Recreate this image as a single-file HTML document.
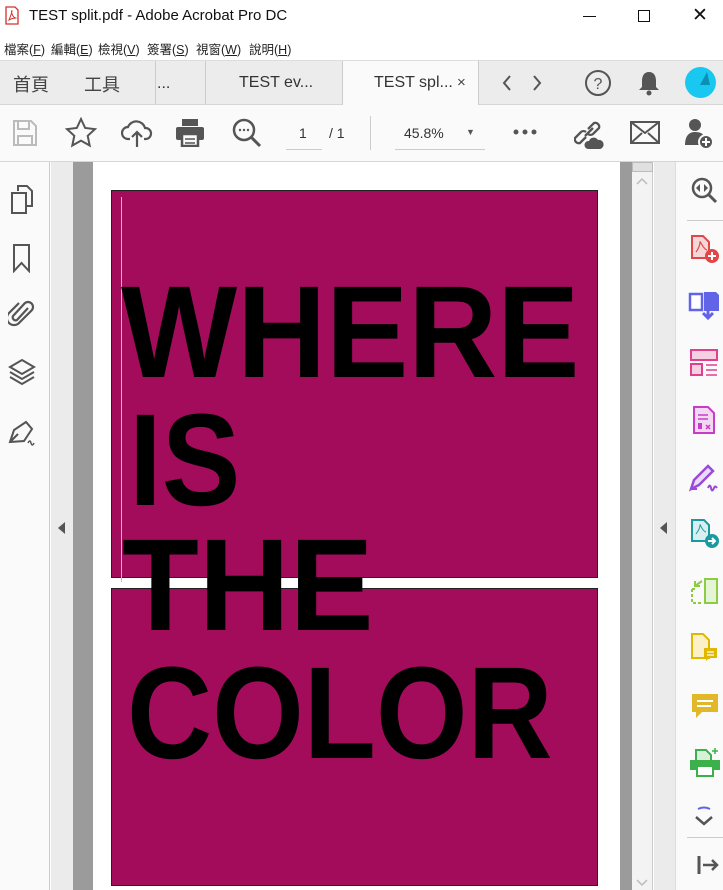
<!DOCTYPE html>
<html><head><meta charset="utf-8"><style>
*{margin:0;padding:0;box-sizing:border-box}
body{width:723px;height:890px;overflow:hidden;background:#fff;font-family:"Liberation Sans","Noto Sans CJK TC",sans-serif;position:relative;color:#333}
.a{position:absolute}
.m{position:absolute;top:39px;font-size:12.5px;color:#222;white-space:nowrap}
.big{position:absolute;font-weight:bold;font-size:131px;line-height:131px;color:#000;transform-origin:0 0;white-space:nowrap}
</style></head><body>
<div class="a" style="left:0;top:0;width:723px;height:34px;background:#fff"></div>
<svg class="a" style="left:5px;top:6px" width="14" height="19" viewBox="0 0 14 19"><path d="M1 1h9l3 3v14H1z" fill="#fff" stroke="#d4302e" stroke-width="1.3"/><path d="M4 14c2-5 3-8 3-9s-1 0 0 3 3 4 4 4-4 0-7 2z" fill="none" stroke="#d4302e" stroke-width="1"/></svg>
<div class="a" style="left:29px;top:7px;font-size:15px;color:#111">TEST split.pdf - Adobe Acrobat Pro DC</div>
<div class="a" style="left:583px;top:16px;width:13px;height:1px;background:#111"></div>
<div class="a" style="left:638px;top:10px;width:12px;height:12px;border:1px solid #111"></div>
<div class="a" style="left:692px;top:4px;font-size:19px;color:#111">✕</div>
<div class="a" style="left:0;top:34px;width:723px;height:26px;background:#fff"></div>
<div class="m" style="left:4px">檔案(<u>F</u>)</div>
<div class="m" style="left:51px">編輯(<u>E</u>)</div>
<div class="m" style="left:98px">檢視(<u>V</u>)</div>
<div class="m" style="left:147px">簽署(<u>S</u>)</div>
<div class="m" style="left:196px">視窗(<u>W</u>)</div>
<div class="m" style="left:249px">說明(<u>H</u>)</div>
<div class="a" style="left:0;top:60px;width:723px;height:45px;background:#ececec;border-top:1px solid #ddd;border-bottom:1px solid #d6d6d6"></div>
<div class="a" style="left:13px;top:71px;font-size:18px;color:#444">首頁</div>
<div class="a" style="left:84px;top:71px;font-size:18px;color:#444">工具</div>
<div class="a" style="left:155px;top:61px;width:1px;height:43px;background:#ccc"></div>
<div class="a" style="left:157px;top:75px;font-size:16px;color:#333">...</div>
<div class="a" style="left:205px;top:61px;width:1px;height:43px;background:#ccc"></div>
<div class="a" style="left:239px;top:74px;font-size:16px;color:#333">TEST ev...</div>
<div class="a" style="left:342px;top:61px;width:137px;height:45px;background:#fafafa;border-left:1px solid #ccc;border-right:1px solid #ccc"></div>
<div class="a" style="left:374px;top:74px;font-size:16px;color:#333">TEST spl...</div>
<div class="a" style="left:457px;top:74px;font-size:15px;color:#444">×</div>
<svg class="a" style="left:500px;top:74px" width="45" height="18"><path d="M10 2 4 9l6 7M34 2l6 7-6 7" fill="none" stroke="#555" stroke-width="2"/></svg>
<svg class="a" style="left:584px;top:69px" width="28" height="28"><circle cx="14" cy="14" r="12" fill="none" stroke="#555" stroke-width="2"/><text x="14" y="20" font-size="16" text-anchor="middle" fill="#555" font-family="Liberation Sans">?</text></svg>
<svg class="a" style="left:637px;top:69px" width="24" height="28"><path d="M12 3c-5 0-7 4-7 9v6l-3 3h20l-3-3v-6c0-5-2-9-7-9z" fill="#555"/><circle cx="12" cy="24" r="2.5" fill="#555"/></svg>
<div class="a" style="left:685px;top:67px;width:31px;height:31px;border-radius:50%;background:#18c8f0"></div>
<svg class="a" style="left:685px;top:67px" width="31" height="31"><path d="M15 18 22 5l3 13z" fill="#0a8fb5"/></svg>
<div class="a" style="left:0;top:105px;width:723px;height:57px;background:#fafafa;border-bottom:1px solid #d6d6d6"></div>
<svg class="a" style="left:12px;top:119px" width="26" height="28"><path d="M2 2h17l5 5v19H2z" fill="none" stroke="#bbb" stroke-width="2"/><path d="M6 2v8h11V2M6 26v-9h14v9" fill="none" stroke="#bbb" stroke-width="2"/></svg>
<svg class="a" style="left:65px;top:117px" width="32" height="31"><path d="M16 2l4.2 9 9.8 1.1-7.3 6.7 2 9.7L16 23.6l-8.7 4.9 2-9.7L2 12.1l9.8-1.1z" fill="none" stroke="#555" stroke-width="2"/></svg>
<svg class="a" style="left:121px;top:117px" width="32" height="32"><path d="M9 22H7a6 6 0 0 1 0-12 9 9 0 0 1 17 1 5.5 5.5 0 0 1 1 11h-2" fill="none" stroke="#555" stroke-width="2.2"/><path d="M16 30V15m-5 5 5-5 5 5" fill="none" stroke="#555" stroke-width="2.2"/></svg>
<svg class="a" style="left:175px;top:118px" width="30" height="29"><rect x="7" y="1" width="16" height="7" fill="#555"/><rect x="1" y="9" width="28" height="13" rx="2" fill="#555"/><rect x="7" y="16" width="16" height="12" fill="#fafafa" stroke="#555" stroke-width="2.5"/><path d="M10 21h10M10 25h10" stroke="#555" stroke-width="1.5"/></svg>
<svg class="a" style="left:232px;top:118px" width="30" height="31"><circle cx="12" cy="12" r="10" fill="none" stroke="#555" stroke-width="2.5"/><path d="M19 19l9 9" stroke="#555" stroke-width="3"/><circle cx="8" cy="12" r="1.2" fill="#555"/><circle cx="12" cy="12" r="1.2" fill="#555"/><circle cx="16" cy="12" r="1.2" fill="#555"/></svg>
<div class="a" style="left:299px;top:125px;font-size:14px;color:#333">1</div>
<div class="a" style="left:286px;top:149px;width:36px;height:1px;background:#ccc"></div>
<div class="a" style="left:329px;top:125px;font-size:14px;color:#333">/ 1</div>
<div class="a" style="left:370px;top:116px;width:1px;height:34px;background:#ccc"></div>
<div class="a" style="left:404px;top:125px;font-size:14px;color:#333">45.8%</div>
<div class="a" style="left:466px;top:127px;font-size:9px;color:#555">▼</div>
<div class="a" style="left:395px;top:149px;width:90px;height:1px;background:#ccc"></div>
<svg class="a" style="left:512px;top:128px" width="26" height="8"><circle cx="4" cy="4" r="2.5" fill="#555"/><circle cx="13" cy="4" r="2.5" fill="#555"/><circle cx="22" cy="4" r="2.5" fill="#555"/></svg>
<svg class="a" style="left:574px;top:117px" width="32" height="33"><path d="M12 20 6 26a4 4 0 0 1-5-5l6-6a4 4 0 0 1 5 0M14 12l6-6a4 4 0 0 1 5 5l-6 6a4 4 0 0 1-5 0M11 19l8-8" fill="none" stroke="#555" stroke-width="2.3"/><path d="M14 32a4 4 0 0 1 1-8 5 5 0 0 1 9-1 4.5 4.5 0 0 1 2 9z" fill="#555"/></svg>
<svg class="a" style="left:630px;top:121px" width="30" height="23"><rect x="1" y="1" width="28" height="21" fill="none" stroke="#555" stroke-width="2"/><path d="M1 1l14 11L29 1M1 22l11-10M29 22 18 12" fill="none" stroke="#555" stroke-width="2"/></svg>
<svg class="a" style="left:684px;top:117px" width="32" height="34"><circle cx="11" cy="8" r="6" fill="#555"/><path d="M1 28c0-9 4-13 10-13s8 2 9 4v9z" fill="#555"/><circle cx="22" cy="25" r="7" fill="#555" stroke="#fafafa" stroke-width="2"/><path d="M22 21v8M18 25h8" stroke="#fff" stroke-width="2"/></svg>
<div class="a" style="left:0;top:162px;width:50px;height:728px;background:#fafafa;border-right:1px solid #ccc"></div>
<div class="a" style="left:51px;top:162px;width:22px;height:728px;background:#ebebeb"></div>
<div class="a" style="left:73px;top:162px;width:20px;height:728px;background:#9b9b9b"></div>
<svg class="a" style="left:10px;top:185px" width="26" height="30" fill="none" stroke="#555" stroke-width="2"><path d="M8 6V1h9l5 5v15h-5"/><path d="M2 8h14v20H2z"/></svg>
<svg class="a" style="left:12px;top:243px" width="20" height="30"><path d="M2 2h15v26l-7.5-8L2 28z" fill="none" stroke="#555" stroke-width="2"/></svg>
<svg class="a" style="left:8px;top:298px" width="28" height="30"><path d="M20 10 9 22a3 3 0 0 1-4-4L17 5a5 5 0 0 1 7 7L11 25a7 7 0 0 1-10-10L11 5" fill="none" stroke="#555" stroke-width="2.2"/></svg>
<svg class="a" style="left:8px;top:358px" width="28" height="30"><path d="M14 2 26 9 14 16 2 9z" fill="none" stroke="#555" stroke-width="2"/><path d="M2 14l12 7 12-7M2 19l12 7 12-7" fill="none" stroke="#555" stroke-width="2"/></svg>
<svg class="a" style="left:6px;top:418px" width="30" height="28"><path d="M4 24 8 12l12-8 6 7-8 12z" fill="none" stroke="#555" stroke-width="2"/><path d="M4 24l8-8" stroke="#555" stroke-width="2"/><path d="M22 25q2-4 3 0t3 0" fill="none" stroke="#555" stroke-width="1.5"/></svg>
<div class="a" style="left:58px;top:522px;width:0;height:0;border-top:6px solid transparent;border-bottom:6px solid transparent;border-right:7px solid #555"></div>
<div class="a" style="left:93px;top:162px;width:527px;height:728px;background:#fff"></div>
<div class="a" style="left:111px;top:190px;width:487px;height:388px;background:#a20c5a;border:1px solid #222"></div>
<div class="a" style="left:111px;top:588px;width:487px;height:298px;background:#a20c5a;border:1px solid #222"></div>
<div class="a" style="left:121px;top:197px;width:1px;height:385px;background:#9fd0c8"></div>
<div class="big" style="left:121px;top:266px;transform:scaleX(.94)">WHERE</div>
<div class="big" style="left:129px;top:394px;transform:scaleX(.9)">IS</div>
<div class="big" style="left:122px;top:519px;transform:scaleX(.96)">THE</div>
<div class="big" style="left:127px;top:647px;transform:scaleX(.9)">COLOR</div>
<div class="a" style="left:620px;top:162px;width:12px;height:728px;background:#9b9b9b"></div>
<div class="a" style="left:632px;top:162px;width:21px;height:728px;background:#f3f3f3;border-right:1px solid #ccc"></div>
<div class="a" style="left:632px;top:162px;width:21px;height:10px;background:#e0e0e0;border:1px solid #bbb"></div>
<svg class="a" style="left:636px;top:177px" width="12" height="8"><path d="M1 7 6 2l5 5" fill="none" stroke="#bbb" stroke-width="1.5"/></svg>
<svg class="a" style="left:636px;top:879px" width="12" height="8"><path d="M1 1l5 5 5-5" fill="none" stroke="#bbb" stroke-width="1.5"/></svg>
<div class="a" style="left:654px;top:162px;width:22px;height:728px;background:#ebebeb;border-right:1px solid #ddd"></div>
<div class="a" style="left:660px;top:522px;width:0;height:0;border-top:6px solid transparent;border-bottom:6px solid transparent;border-right:7px solid #555"></div>
<div class="a" style="left:676px;top:162px;width:47px;height:728px;background:#fafafa"></div>
<svg class="a" style="left:690px;top:176px" width="28" height="28"><circle cx="12" cy="12" r="9" fill="none" stroke="#555" stroke-width="2.5"/><path d="M19 19l7 7" stroke="#555" stroke-width="3"/><path d="M10 8l-4 4 4 4zM14 8l4 4-4 4z" fill="#555"/></svg>
<div class="a" style="left:687px;top:220px;width:36px;height:1px;background:#ccc"></div>
<svg class="a" style="left:690px;top:234px" width="30" height="30"><path d="M2 2h11l6 6v16H2z" fill="#f6d6d6" stroke="#e04848" stroke-width="2"/><path d="M6 18c3-4 4-8 4-10s3 7 7 8" fill="none" stroke="#e04848" stroke-width="1.2"/><circle cx="22" cy="22" r="7" fill="#e04848"/><path d="M22 18v8M18 22h8" stroke="#fff" stroke-width="2"/></svg>
<svg class="a" style="left:688px;top:290px" width="32" height="32"><path d="M2 4h12v16H2z" fill="#fff" stroke="#6264e8" stroke-width="2.5"/><path d="M16 2h12l3 3v16H16z" fill="#6264e8"/><path d="M20 18v10m-5-5 5 5 5-5" fill="none" stroke="#6264e8" stroke-width="3"/></svg>
<svg class="a" style="left:689px;top:348px" width="30" height="30"><rect x="2" y="2" width="26" height="10" fill="#f5d0e2" stroke="#e0408e" stroke-width="2"/><rect x="2" y="16" width="11" height="11" fill="#f5d0e2" stroke="#e0408e" stroke-width="2"/><path d="M17 17h11M17 22h11M17 27h11" stroke="#e0408e" stroke-width="1.5"/></svg>
<svg class="a" style="left:692px;top:405px" width="26" height="30"><path d="M2 2h14l6 6v20H2z" fill="#f2d8f2" stroke="#c83cc8" stroke-width="2"/><path d="M6 10h10M6 14h10" stroke="#c83cc8" stroke-width="1.5"/><rect x="6" y="18" width="4" height="6" fill="#c83cc8"/><path d="M14 20l4 4M18 20l-4 4" stroke="#c83cc8" stroke-width="1.5"/></svg>
<svg class="a" style="left:688px;top:462px" width="32" height="30"><path d="M3 27l3-9L20 4l5 5-14 14z" fill="#e8dcfa" stroke="#9a4ad8" stroke-width="2.5"/><path d="M3 27h6M20 26q2-5 3 0t3 0q1-3 3 0" fill="none" stroke="#9a4ad8" stroke-width="2"/></svg>
<svg class="a" style="left:690px;top:518px" width="30" height="32"><path d="M2 2h12l5 5v16H2z" fill="#d8eef0" stroke="#1a9a9e" stroke-width="2"/><path d="M6 16c3-4 4-7 4-9s2 6 6 7" fill="none" stroke="#1a9a9e" stroke-width="1"/><circle cx="22" cy="23" r="7" fill="#1a9a9e"/><path d="M18 23h7m-3-3 3 3-3 3" fill="none" stroke="#fff" stroke-width="2"/></svg>
<svg class="a" style="left:690px;top:577px" width="30" height="28"><rect x="15" y="2" width="12" height="24" fill="#e4f4d4" stroke="#8ccc44" stroke-width="2"/><path d="M2 12v14h11M2 12h3" fill="none" stroke="#8ccc44" stroke-width="2" stroke-dasharray="3 2"/><path d="M12 4 5 9m0-5v5h5" fill="none" stroke="#8ccc44" stroke-width="2"/></svg>
<svg class="a" style="left:690px;top:632px" width="30" height="32"><path d="M2 2h11l6 6v18H2z" fill="#fbf0c8" stroke="#e0b800" stroke-width="2"/><path d="M14 16h13v10h-8l-3 3v-3h-2z" fill="#e0b800"/><path d="M17 20h7M17 23h7" stroke="#fff" stroke-width="1.3"/></svg>
<svg class="a" style="left:690px;top:692px" width="30" height="30"><path d="M2 2h26v18H12l-6 6v-6H2z" fill="#e0b828"/><path d="M7 9h16M7 14h14" stroke="#fff" stroke-width="2"/></svg>
<svg class="a" style="left:688px;top:746px" width="34" height="34"><path d="M8 14V4h10l5 5v5" fill="#d8f0d8" stroke="#3cb04a" stroke-width="2"/><rect x="2" y="14" width="30" height="10" fill="#3cb04a"/><rect x="9" y="20" width="16" height="10" fill="#fff" stroke="#3cb04a" stroke-width="2"/><path d="M27 2v6M24 5h6" stroke="#3cb04a" stroke-width="1.5"/></svg>
<svg class="a" style="left:693px;top:805px" width="22" height="24"><path d="M5 4q6-3 12 0" stroke="#6264e8" stroke-width="2" fill="none"/><path d="M3 12l8 7 8-7" fill="none" stroke="#555" stroke-width="2.5"/></svg>
<div class="a" style="left:687px;top:837px;width:36px;height:1px;background:#ccc"></div>
<svg class="a" style="left:697px;top:855px" width="24" height="20"><path d="M2 1v18" stroke="#555" stroke-width="3"/><path d="M6 10h14m-5-5 5 5-5 5" fill="none" stroke="#555" stroke-width="2.5"/></svg>
</body></html>
